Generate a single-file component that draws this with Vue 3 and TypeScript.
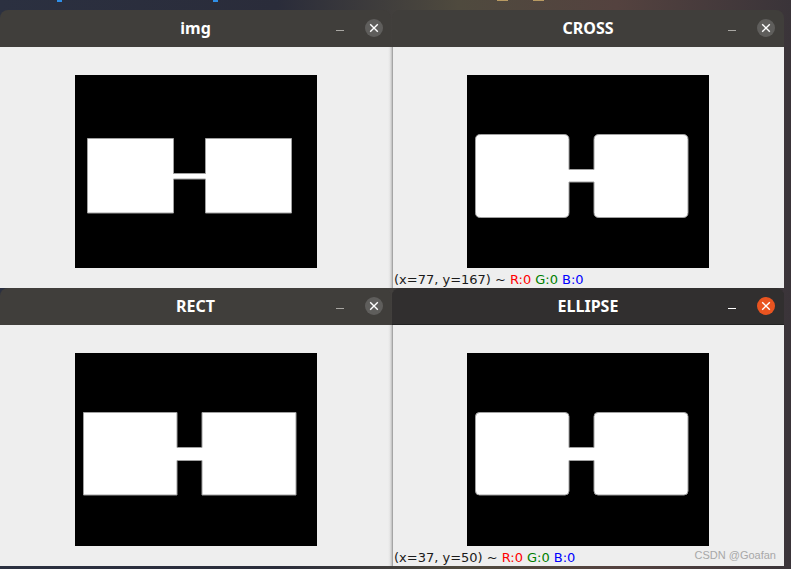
<script setup lang="ts">
interface Status { pos: string; r: number; g: number; b: number }
interface Win {
  title: string
  cls: string
  focused: boolean
  shape: string
  status?: Status
}

function rects(l1: number, l2: number, r1: number, r2: number, t: number, b: number, bt: number, bb: number, c: number): string {
  return [
    `M${l1 + c} ${t}H${l2 - c}Q${l2} ${t} ${l2} ${t + c}V${bt}H${r1}V${t + c}Q${r1} ${t} ${r1 + c} ${t}`,
    `H${r2 - c}Q${r2} ${t} ${r2} ${t + c}V${b - c}Q${r2} ${b} ${r2 - c} ${b}`,
    `H${r1 + c}Q${r1} ${b} ${r1} ${b - c}V${bb}H${l2}V${b - c}Q${l2} ${b} ${l2 - c} ${b}`,
    `H${l1 + c}Q${l1} ${b} ${l1} ${b - c}V${t + c}Q${l1} ${t} ${l1 + c} ${t}Z`,
  ].join('')
}

const windows: Win[] = [
  { title: 'img', cls: 'w-tl', focused: false, shape: rects(12.5, 98.5, 130.5, 216.5, 63.5, 138, 98.5, 104, 0) },
  {
    title: 'CROSS', cls: 'w-tr', focused: false,
    shape: rects(8.5, 102, 127, 221, 59.5, 142.5, 94.5, 107, 5),
    status: { pos: '(x=77, y=167) ~', r: 0, g: 0, b: 0 },
  },
  { title: 'RECT', cls: 'w-bl', focused: false, shape: rects(8.5, 102, 127, 221, 59.5, 142, 94.5, 107.5, 0) },
  {
    title: 'ELLIPSE', cls: 'w-br', focused: true,
    shape: rects(8.5, 102, 127, 221, 59.5, 142, 94.5, 107.5, 4),
    status: { pos: '(x=37, y=50) ~', r: 0, g: 0, b: 0 },
  },
]
</script>

<template>
  <div class="desktop">
    <section v-for="w in windows" :key="w.title" class="window" :class="[w.cls, { focused: w.focused }]">
      <header class="titlebar">
        <span class="title">{{ w.title }}</span>
        <span class="min"></span>
        <span class="close">
          <svg width="18" height="18" viewBox="0 0 18 18">
            <path d="M5.2 5.2 12.8 12.8M12.8 5.2 5.2 12.8" stroke="#fff" stroke-width="1.4" fill="none" />
          </svg>
        </span>
      </header>
      <div class="content">
        <svg class="picture" width="242" height="193" viewBox="0 0 242 193">
          <rect width="242" height="193" fill="#000" />
          <path class="shape" :d="w.shape" />
        </svg>
        <div v-if="w.status" class="status">
          <span>{{ w.status.pos }}</span>
          <span class="red">R:{{ w.status.r }}</span>
          <span class="green">G:{{ w.status.g }}</span>
          <span class="blue">B:{{ w.status.b }}</span>
        </div>
      </div>
    </section>
    <span class="mark a"></span>
    <span class="mark b"></span>
    <span class="mark c"></span>
    <span class="mark d"></span>
    <span class="watermark">CSDN @Goafan</span>
  </div>
</template>

<style>
html, body { margin: 0; background: #23252e; }
</style>

<style scoped>
.desktop {
  position: relative;
  width: 791px;
  height: 569px;
  overflow: hidden;
  background: linear-gradient(90deg, #2b3040 0%, #2a2c3a 35%, #4f4a3e 58%, #54423f 78%, #3a3439 100%);
  font-family: "Noto Sans", sans-serif;
}
.window {
  position: absolute;
  display: flex;
  flex-direction: column;
  width: 392px;
  box-sizing: border-box;
}
.w-tl { left: 0; top: 10px; height: 278px; z-index: 1; }
.w-tr { left: 392px; top: 10px; height: 278px; z-index: 2; }
.w-bl { left: 0; top: 288px; height: 278px; z-index: 3; }
.w-br { left: 392px; top: 288px; height: 278px; z-index: 4; }
.titlebar {
  display: flex;
  align-items: center;
  justify-content: center;
  position: relative;
  flex: none;
  height: 37px;
  background: #403e3b;
  border-radius: 8px 8px 0 0;
  color: #fff;
}
.w-tl .titlebar, .w-bl .titlebar { margin-right: 1px; }
.focused .titlebar { background: #312f2f; box-shadow: inset 0 -1px 0 #222; }
.title {
  font-size: 16px;
  font-weight: 700;
  line-height: 36px;
  transform: translateY(-1.5px);
}
.min {
  position: absolute;
  right: 47px;
  top: 20px;
  width: 8px;
  height: 1px;
  background: #a9a7a3;
}
.w-tr .min, .w-br .min { right: 48px; }
.focused .min { background: #fff; }
.close {
  position: absolute;
  right: 8px;
  top: 9px;
  width: 18px;
  height: 18px;
  border-radius: 50%;
  background: #5f5e5c;
}
.w-tr .close, .w-br .close { right: 9px; }
.focused .close { background: #e95420; }
.close svg { display: block; }
.content {
  flex: 1;
  position: relative;
  background: #eeeeee;
}
.w-tl .content, .w-bl .content {
  background: linear-gradient(270deg, #bdbdbd 0, #e4e4e4 2px, #eeeeee 4px);
}
.w-tr .content, .w-br .content { box-shadow: inset 1px 0 0 #a5a5a5; }
.picture {
  display: block;
  margin: 28px 0 0 75px;
}
.shape {
  fill: #fff;
  stroke: #a0a0a0;
  stroke-width: 1;
}
.status {
  display: flex;
  gap: 4px;
  margin: 5px 0 0 2px;
  font: 13px/14px "DejaVu Sans", sans-serif;
  color: #1a1a1a;
  white-space: pre;
}
.red { color: #ff0000; }
.green { color: #007f00; }
.blue { color: #0000ff; }
.mark { position: absolute; top: 0; height: 2px; }
.mark.a { left: 57px; width: 5px; background: #2f8fe8; }
.mark.b { left: 213px; width: 5px; background: #2f8fe8; }
.mark.c { left: 497px; width: 11px; height: 1px; background: #b89a62; }
.mark.d { left: 533px; width: 11px; height: 1px; background: #b89a62; }
.watermark {
  position: absolute;
  right: 15px;
  top: 548px;
  z-index: 5;
  font: 11px/14px "Liberation Sans", sans-serif;
  color: #a8a8a8;
}
</style>
